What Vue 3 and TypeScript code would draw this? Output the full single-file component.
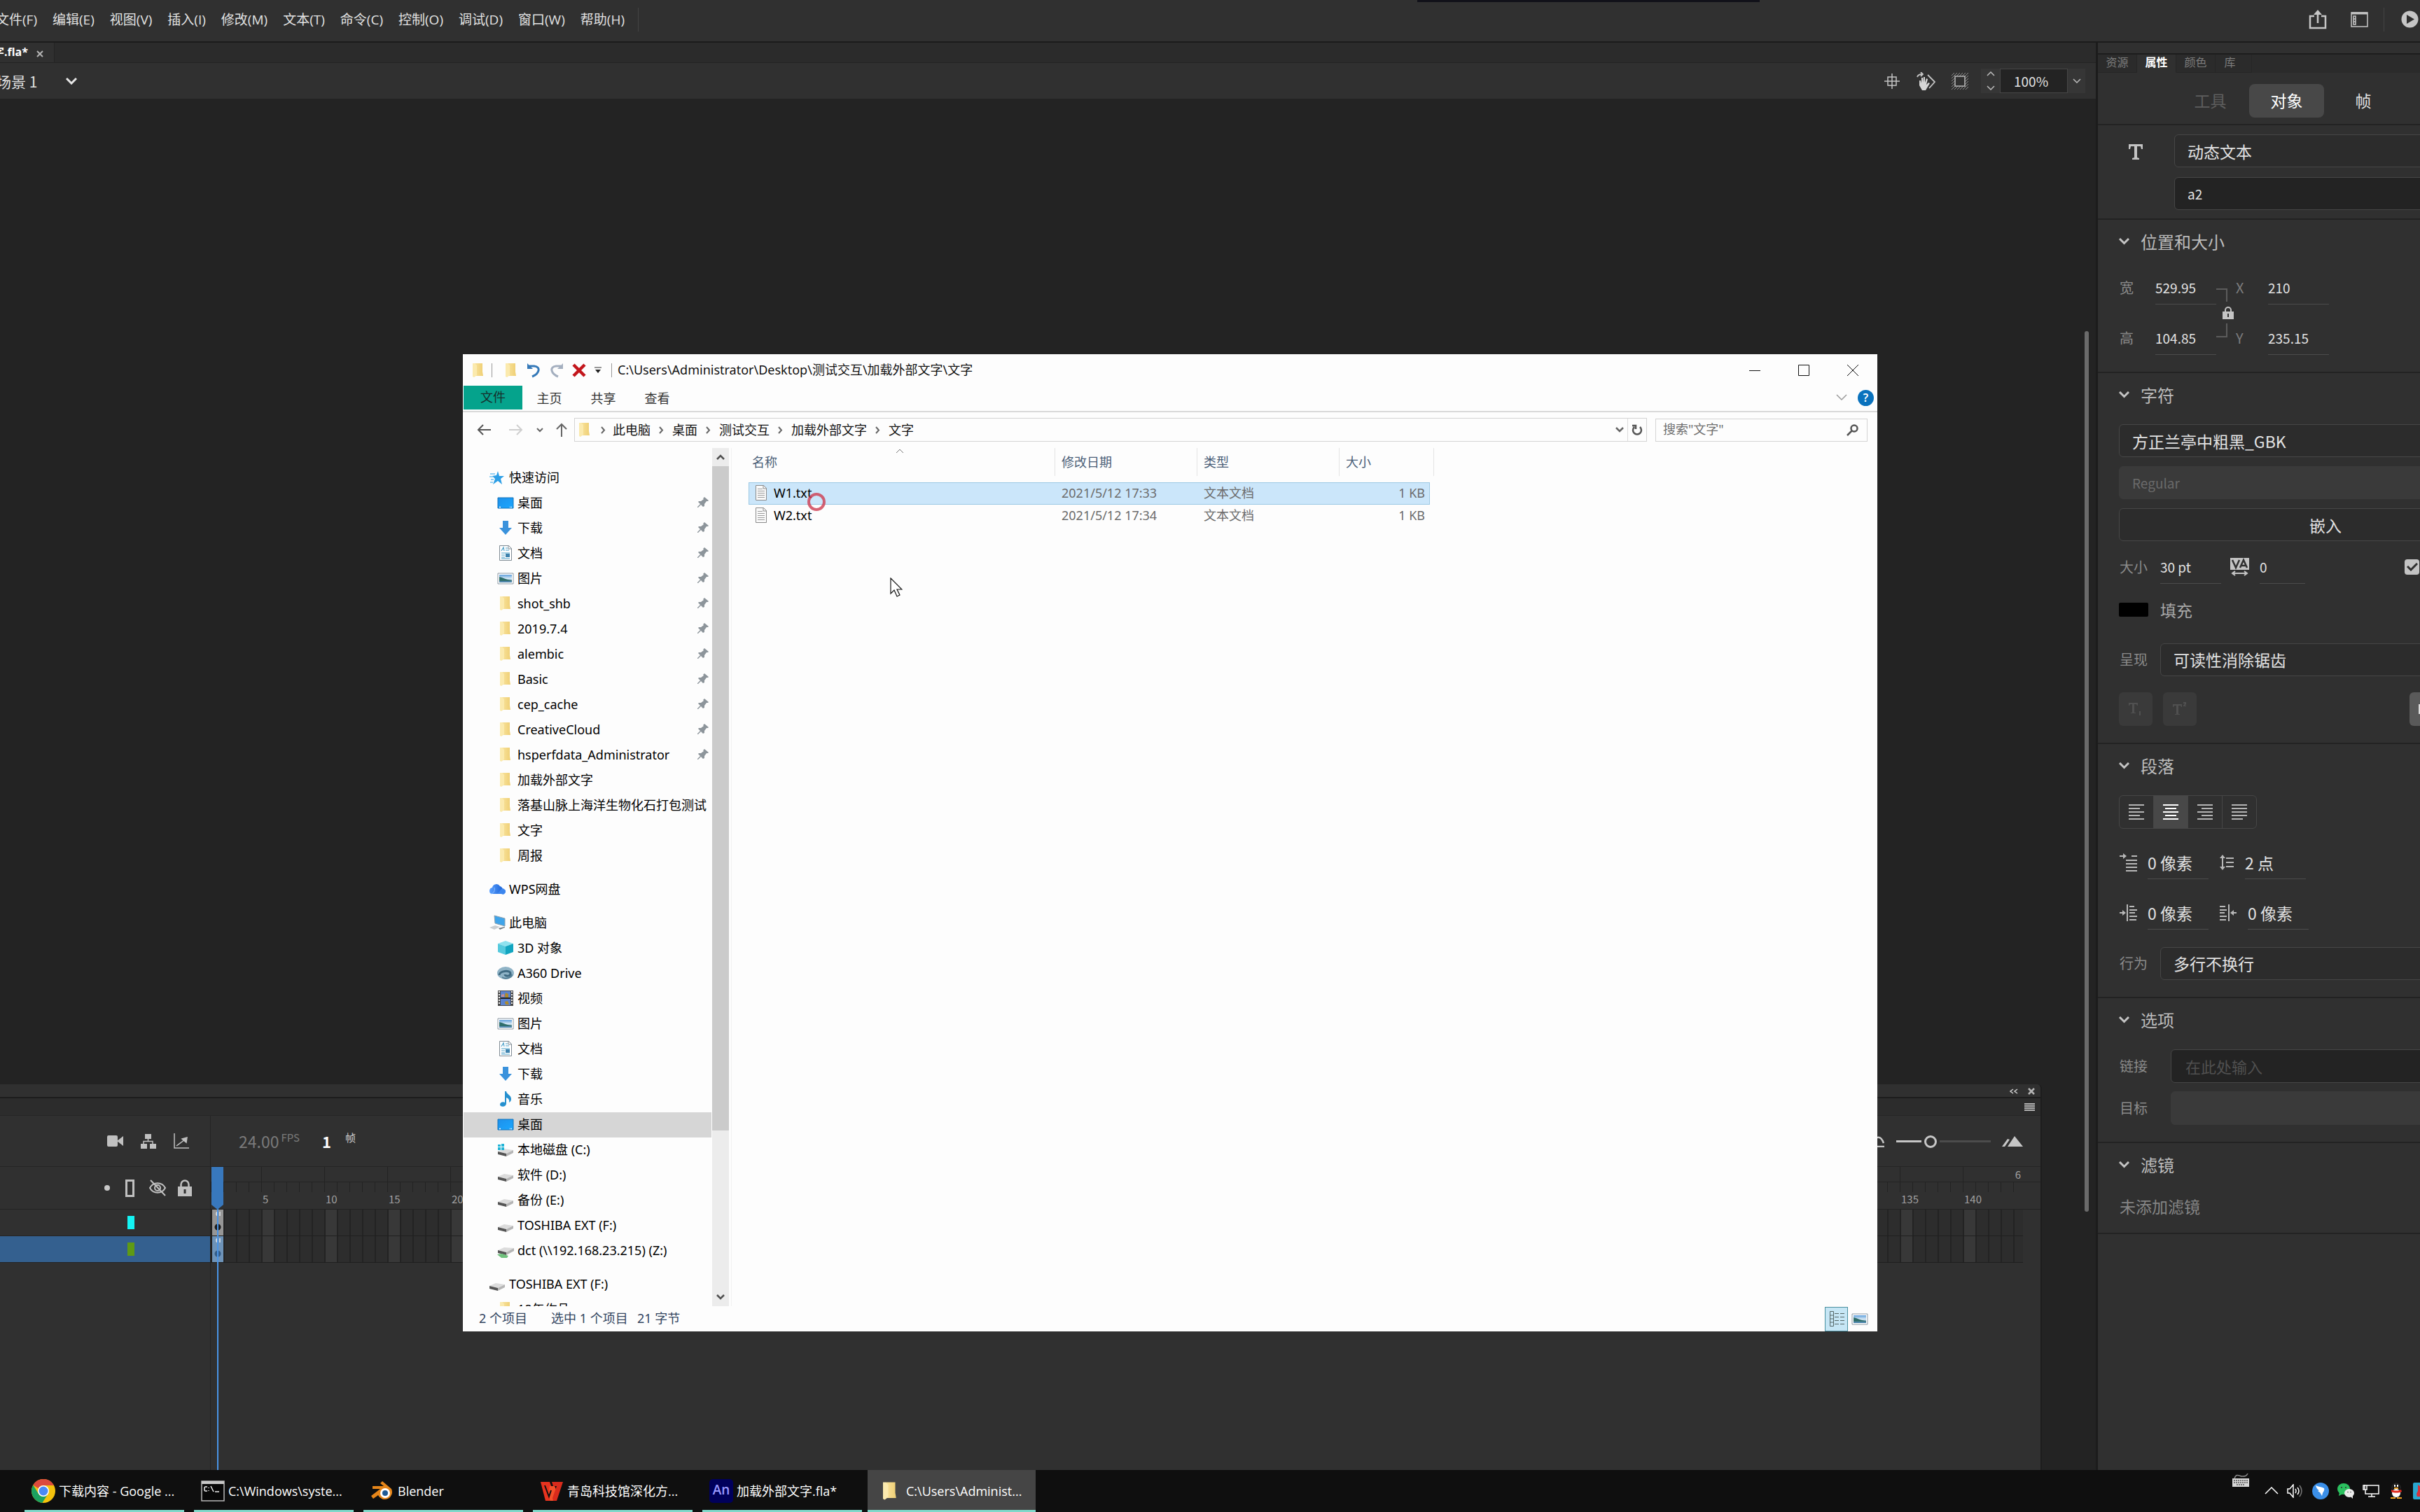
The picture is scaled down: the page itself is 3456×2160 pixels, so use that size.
<script setup lang="ts">
import { ref } from 'vue'

interface NavItem {
  icon: string
  label: string
  root?: boolean
  pinned?: boolean
  gap?: boolean
  active?: boolean
}

const menus = ['文件(F)', '编辑(E)', '视图(V)', '插入(I)', '修改(M)', '文本(T)', '命令(C)', '控制(O)', '调试(D)', '窗口(W)', '帮助(H)']

const panelTabs = ['资源', '属性', '颜色', '库']

const nav: NavItem[] = [
  { icon: 'star', label: '快速访问', root: true },
  { icon: 'desktop', label: '桌面', pinned: true },
  { icon: 'download', label: '下载', pinned: true },
  { icon: 'doc', label: '文档', pinned: true },
  { icon: 'picture', label: '图片', pinned: true },
  { icon: 'folder', label: 'shot_shb', pinned: true },
  { icon: 'folder', label: '2019.7.4', pinned: true },
  { icon: 'folder', label: 'alembic', pinned: true },
  { icon: 'folder', label: 'Basic', pinned: true },
  { icon: 'folder', label: 'cep_cache', pinned: true },
  { icon: 'folder', label: 'CreativeCloud', pinned: true },
  { icon: 'folder', label: 'hsperfdata_Administrator', pinned: true },
  { icon: 'folder', label: '加载外部文字' },
  { icon: 'folder', label: '落基山脉上海洋生物化石打包测试' },
  { icon: 'folder', label: '文字' },
  { icon: 'folder', label: '周报' },
  { icon: 'cloud', label: 'WPS网盘', root: true, gap: true },
  { icon: 'pc', label: '此电脑', root: true, gap: true },
  { icon: 'cube', label: '3D 对象' },
  { icon: 'a360', label: 'A360 Drive' },
  { icon: 'video', label: '视频' },
  { icon: 'picture', label: '图片' },
  { icon: 'doc', label: '文档' },
  { icon: 'download', label: '下载' },
  { icon: 'music', label: '音乐' },
  { icon: 'desktop', label: '桌面', active: true },
  { icon: 'drivec', label: '本地磁盘 (C:)' },
  { icon: 'drive', label: '软件 (D:)' },
  { icon: 'drive', label: '备份 (E:)' },
  { icon: 'drive', label: 'TOSHIBA EXT (F:)' },
  { icon: 'drivenet', label: 'dct (\\\\192.168.23.215) (Z:)' },
  { icon: 'drive', label: 'TOSHIBA EXT (F:)', root: true, gap: true },
  { icon: 'folder', label: '18年作品' },
]

const crumbs = ['此电脑', '桌面', '测试交互', '加载外部文字', '文字']
const files = [
  { name: 'W1.txt', date: '2021/5/12 17:33', type: '文本文档', size: '1 KB' },
  { name: 'W2.txt', date: '2021/5/12 17:34', type: '文本文档', size: '1 KB' },
]
const selected = ref(0)
const align = ref(1)
const zoomLevel = ref(28)
const instanceName = ref('a2')

const aligns = [
  { label: '左对齐', d: 'M0 1h22M0 6h16M0 11h22M0 16h16M0 21h22' },
  { label: '居中对齐', d: 'M0 1h22M3 6h16M0 11h22M3 16h16M0 21h22' },
  { label: '右对齐', d: 'M0 1h22M6 6h16M0 11h22M6 16h16M0 21h22' },
  { label: '两端对齐', d: 'M0 1h22M0 6h22M0 11h22M0 16h22M0 21h16' },
]

const frames = Array.from({ length: 144 }, (_, i) => i + 1)

const tasks = [
  { icon: 'chrome', label: '下载内容 - Google ...' },
  { icon: 'cmd', label: 'C:\\Windows\\syste...' },
  { icon: 'blender', label: 'Blender' },
  { icon: 'wps', label: '青岛科技馆深化方...' },
  { icon: 'an', label: '加载外部文字.fla*' },
  { icon: 'folder', label: 'C:\\Users\\Administ...', active: true },
]
</script>

<template>
  <svg class="sprite" aria-hidden="true">
    <defs>
      <linearGradient id="g-fold" x1="0" x2="1"><stop offset="0" stop-color="#f8e29c" /><stop offset="1" stop-color="#efcf74" /></linearGradient>
      <linearGradient id="g-desk" x1="0" x2="1" y2="1"><stop offset="0" stop-color="#1e90ea" /><stop offset="1" stop-color="#1aa7ff" /></linearGradient>
      <linearGradient id="g-cloud" x2="1"><stop offset="0" stop-color="#5aa0ff" /><stop offset="1" stop-color="#1c63d6" /></linearGradient>
      <linearGradient id="g-sky" y2="1" x2="0"><stop offset="0" stop-color="#5f9fdc" /><stop offset="0.5" stop-color="#d6e8f5" /><stop offset="1" stop-color="#2f6f9c" /></linearGradient>
    </defs>
    <symbol id="i-folder" viewBox="0 0 24 24">
      <path d="M7 2h11v12l1 6H7z" fill="url(#g-fold)" />
      <path d="M4 2h3l3 3v14l-4 3-2-1z" fill="#fbeaae" />
    </symbol>
    <symbol id="i-star" viewBox="0 0 24 24">
      <path d="M13 3l2 7h7l-5 4 2 8-6-5-7 5 3-8-4-4 6-1z" fill="#2d9fe6" />
      <path d="M2 7h7M1 11h5M3 15h4M2 19h4" stroke="#6fc0f0" stroke-width="1.500" />
    </symbol>
    <symbol id="i-desktop" viewBox="0 0 24 24">
      <path d="M1 5h22v15H1z" fill="url(#g-desk)" stroke="#1572b8" />
      <path d="M3 18.500h2M18 18.500h1M20 18.500h1" stroke="#fff" stroke-width="1.500" />
    </symbol>
    <symbol id="i-download" viewBox="0 0 24 24"><path d="M8 2h8v10h5l-9 10-9-10h5z" fill="#3a92dc" /></symbol>
    <symbol id="i-doc" viewBox="0 0 24 24">
      <path d="M3.500 1.500h13l4 4v17h-17z" fill="#fff" stroke="#7f8a93" />
      <path d="M16 1v5h5" fill="none" stroke="#7f8a93" />
      <path d="M6 9l3-5 1 5M12 5h3M12 8h5M6 12h12M6 15h5M6 18h5M6 20h12" fill="none" stroke="#4a9fc8" stroke-width="1.200" />
      <path d="M12 13h6v5h-6z" fill="#3d82ad" />
    </symbol>
    <symbol id="i-picture" viewBox="0 0 24 24">
      <path d="M1 5h22v15H1z" fill="#fff" stroke="#8b98a3" />
      <path d="M3 7h18v11H3z" fill="url(#g-sky)" />
      <path d="M3 10c5 1 9 4 18 5v1H3z" fill="#2f6e6b" />
    </symbol>
    <symbol id="i-cloud" viewBox="0 0 24 24">
      <path d="M1 15a5 5 0 0 1 4-5 6 6 0 0 1 11-2 6 6 0 0 1 1 11H5a4 4 0 0 1-4-4z" fill="url(#g-cloud)" />
      <path d="M12 19l5-6a4 4 0 1 1 1 6z" fill="#3c86ee" />
      <path d="M3 19c4-1 6-4 5-9" stroke="#8fc0ff" fill="none" />
    </symbol>
    <symbol id="i-pc" viewBox="0 0 24 24">
      <path d="M8 2l15 4v11L9 13z" fill="#3fa4ea" stroke="#8ba0ae" />
      <path d="M1 19l8-3 7 2-8 4z" fill="#c9ced2" /><path d="M14 20l9-2v1l-7 3z" fill="#6c757d" />
    </symbol>
    <symbol id="i-cube" viewBox="0 0 24 24">
      <path d="M1 6l11-4 11 4-11 4z" fill="#8fe2ef" /><path d="M1 6l11 4v12L1 18z" fill="#55c9dd" /><path d="M23 6l-11 4v12l11-4z" fill="#12a5c0" />
    </symbol>
    <symbol id="i-a360" viewBox="0 0 24 24">
      <ellipse cx="12" cy="12" rx="12" ry="9" fill="#8fb3c6" />
      <path d="M3 15c0-6 16-8 16-2 0 4-8 4-8 1" fill="none" stroke="#3f6a82" stroke-width="3" />
      <path d="M7 18c6 4 14 0 14-4" fill="none" stroke="#557f96" stroke-width="2" />
    </symbol>
    <symbol id="i-video" viewBox="0 0 24 24">
      <path d="M1 1h22v22H1z" fill="#4a4a4a" /><path d="M5 2h14v20H5z" fill="#5b83cf" />
      <path d="M3 2v20M21 2v20" stroke="#eee" stroke-width="2" stroke-dasharray="2 2" />
      <path d="M12 4l4 2v5l-3 2-2-4zM11 17l4-1 2 5h-5z" fill="#b08a28" /><path d="M5 12h14" stroke="#222" stroke-width="2" />
      <path d="M6 7l4-1v4H6z" fill="#c98d96" />
    </symbol>
    <symbol id="i-music" viewBox="0 0 24 24">
      <path d="M11 1h2c1 5 7 5 7 11 0 2-1 4-3 5 1-4-1-6-4-7v8c0 6-9 6-9 2 0-3 4-5 7-3z" fill="#2590cf" />
    </symbol>
    <symbol id="i-drive" viewBox="0 0 24 24">
      <path d="M1 15l9-4 13 2-10 5z" fill="#dcdcdc" /><path d="M1 15l12 3v4L1 19z" fill="#555" /><path d="M13 18l10-5v4l-10 5z" fill="#b5b5b5" />
    </symbol>
    <symbol id="i-drivec" viewBox="0 0 24 24">
      <path d="M1 15l9-4 13 2-10 5z" fill="#dcdcdc" /><path d="M1 15l12 3v4L1 19z" fill="#555" /><path d="M13 18l10-5v4l-10 5z" fill="#b5b5b5" />
      <path d="M1 5h4v3H1zM6 4h4v4H6zM1 9h4v4H1zM6 9h4v4H6z" fill="#22b4d6" />
    </symbol>
    <symbol id="i-drivenet" viewBox="0 0 24 24">
      <path d="M1 12l9-4 14 1-11 6z" fill="#dcdcdc" /><path d="M1 12l12 3v4L1 16z" fill="#555" /><path d="M13 15l11-6v4l-11 6z" fill="#b5b5b5" />
      <path d="M0 18l7-1 9 3-2 3-8 0z" fill="#6fc07c" />
    </symbol>
    <symbol id="i-pin" viewBox="0 0 16 16">
      <path d="M10 0l6 5-1 1-2 0-3 4 0 3-2 1-3-3-4 4-1 0 0-1 4-4-3-3 1-1 3 0 4-3-1-1z" fill="#8d959b" />
    </symbol>
    <symbol id="i-txt" viewBox="0 0 18 24">
      <path d="M1.500 1.500h11l4 4v17h-15z" fill="#fafafa" stroke="#8a8a8a" /><path d="M12 1v5h5" fill="none" stroke="#8a8a8a" />
      <path d="M4 6.500h7M4 9.500h10M4 12.500h10M4 15.500h10M4 18.500h10" stroke="#9a9a9a" />
    </symbol>
    <symbol id="i-chrome" viewBox="0 0 34 34">
      <circle cx="17" cy="17" r="17" fill="#f4c20d" />
      <path d="M2.300 8.500A17 17 0 0 1 32 9H17a8 8 0 0 0-7 4.500z" fill="#dc4a3d" />
      <path d="M2.300 8.500a17 17 0 0 0 13 25.400L23 22a8 8 0 0 1-13-1z" fill="#1aa260" />
      <circle cx="17" cy="17" r="8" fill="#fff" /><circle cx="17" cy="17" r="6.500" fill="#4a8af4" />
    </symbol>
    <symbol id="i-cmd" viewBox="0 0 34 34">
      <path d="M1 3h32v28H1z" fill="#080808" stroke="#b8b8b8" stroke-width="1.500" /><path d="M1 3h32v4H1z" fill="#c8c8c8" />
      <path d="M9 11H6l-1 1v4l1 1h3M11 12v1M11 16v1M14 10l4 8M20 18h6" stroke="#eee" stroke-width="1.500" fill="none" />
    </symbol>
    <symbol id="i-blender" viewBox="0 0 34 34">
      <path d="M1 24l13-10H3v-4h16l-5-4 3-3 13 11a10 10 0 1 1-19 9l-7 5z" fill="#e6861a" />
      <circle cx="21" cy="20" r="7" fill="#fff" /><circle cx="21" cy="20" r="4" fill="#1f5a95" />
    </symbol>
    <symbol id="i-wps" viewBox="0 0 34 34">
      <path d="M1 4h13l5 14-4 13H8z" fill="#e8331f" />
      <path d="M14 10h7l4 9-4 12h-6l-3-8z" fill="#f4512a" />
      <path d="M17 4h16l-9 27h-5l-1-4 6-17h-5z" fill="#d92b1c" />
      <path d="M7 9l6 16 3-9" fill="none" stroke="#0f0f0f" stroke-width="2" />
    </symbol>
    <symbol id="i-an" viewBox="0 0 34 34">
      <rect width="34" height="34" rx="5" fill="#00005b" />
      <text x="17" y="22" text-anchor="middle" font-family="Open Sans, Noto Sans, sans-serif" font-size="19" font-weight="600" fill="#9999ff">An</text>
    </symbol>
  </svg>

  <div class="app">
    <div class="notch"></div>
    <header class="menubar">
      <nav class="menus">
        <button v-for="m in menus" :key="m" type="button">{{ m }}</button>
      </nav>
      <i class="vrule"></i>
      <div class="menu-tools">
        <button type="button" aria-label="共享" class="t-share">
          <svg width="26" height="28" viewBox="0 0 26 28" fill="none" stroke="#c6c6c6" stroke-width="2.500"><path d="M8 9H2v17h22V9h-6M13 19V4" /><path d="M13 0l6 7H7z" fill="#c6c6c6" stroke="none" /></svg>
        </button>
        <button type="button" aria-label="工作区" class="t-work">
          <svg width="25" height="22" viewBox="0 0 25 22" fill="none" stroke="#c6c6c6" stroke-width="1.500"><path d="M1 1h23v20H1z" /><path d="M1 2h23" stroke-width="3" /><path d="M4 6h3v12H4zM4 10h3M4 14h3" /></svg>
        </button>
        <i class="vrule"></i>
        <button type="button" aria-label="测试影片" class="t-play">
          <svg width="25" height="25" viewBox="0 0 25 25"><circle cx="12.500" cy="12.500" r="12" fill="#c6c6c6" /><path d="M8 6l11 6.500L8 19z" fill="#303030" /></svg>
        </button>
      </div>
    </header>

    <div class="workspace">
      <main class="doc">
        <div class="doc-tabs">
          <div class="doc-tab"><span>字.fla*</span><button type="button" aria-label="关闭文档"><svg width="10" height="10" viewBox="0 0 10 10" stroke="#b4b4b4" stroke-width="2"><path d="M1 1l8 8M9 1l-8 8" /></svg></button></div>
        </div>
        <div class="scene-bar">
          <span class="scene">场景 1</span>
          <svg class="scene-caret" width="16" height="10" viewBox="0 0 16 10" fill="none" stroke="#e6e6e6" stroke-width="3"><path d="M1 1l7 7 7-7" /></svg>
          <div class="stage-tools">
            <svg width="22" height="22" viewBox="0 0 22 22" fill="none" stroke="#c4c4c4" stroke-width="1.500"><path d="M5 5h12v12H5zM11 0v22M0 11h22" /></svg>
            <svg width="27" height="26" viewBox="0 0 27 26" fill="none" stroke="#c4c4c4"><path d="M1 7c1-3 4-4 7-4M6 0l3 3-3 3M16 4l10 10-8 9" stroke-width="1.800" /><path d="M4 12l2 0 1 4V8h2v7l1-8h2v8l2-6 2 1-2 8 3-3 2 1-6 10H8l-4-7z" fill="#d6d6d6" stroke="none" /></svg>
            <svg width="24" height="24" viewBox="0 0 24 24" fill="none" stroke="#b8b8b8"><path d="M0 4l4-4M0 8l8-8M0 12L12 0M0 16L16 0M0 20L20 0M0 24L24 0M4 24L24 4M8 24L24 8M12 24l12-12M16 24l8-8M20 24l4-4" stroke="#8c8c8c" /><rect x="5" y="5" width="14" height="14" fill="#303030" stroke-width="1.500" /></svg>
            <div class="zoom-box">
              <div class="spin">
                <svg width="12" height="7" viewBox="0 0 12 7" fill="none" stroke="#bbb" stroke-width="1.500"><path d="M1 6l5-5 5 5" /></svg>
                <svg width="12" height="7" viewBox="0 0 12 7" fill="none" stroke="#bbb" stroke-width="1.500"><path d="M1 1l5 5 5-5" /></svg>
              </div>
              <input aria-label="缩放" value="100%" />
              <button type="button" aria-label="缩放选项"><svg width="12" height="7" viewBox="0 0 12 7" fill="none" stroke="#bbb" stroke-width="1.500"><path d="M1 1l5 5 5-5" /></svg></button>
            </div>
          </div>
        </div>

        <div class="doc-body">
          <div class="stage-col">
            <div class="stage"></div>
            <section class="timeline">
              <div class="tl-head">
                <svg width="12" height="8" viewBox="0 0 12 8" fill="none" stroke="#d0d0d0" stroke-width="1.500"><path d="M5 1L1 4l4 3M11 1L7 4l4 3" /></svg>
                <svg width="10" height="10" viewBox="0 0 10 10" stroke="#b4b4b4" stroke-width="2.500"><path d="M1 1l8 8M9 1l-8 8" /></svg>
              </div>
              <div class="tl-tabs">
                <svg width="15" height="11" viewBox="0 0 15 11" stroke="#b4b4b4" stroke-width="2"><path d="M0 1h15M0 4h15M0 7h15M0 10h15" /></svg>
              </div>
              <div class="tl-bar">
                <div class="tl-left tl-tools">
                  <svg width="23" height="16" viewBox="0 0 23 16" fill="#c0c0c0"><rect width="15" height="16" rx="2" /><path d="M14 8l9-7v14z" /></svg>
                  <svg width="22" height="21" viewBox="0 0 22 21" fill="#c0c0c0"><path d="M6 0h9v7H6zM0 14h9v7H0zM13 14h9v7h-9z" /><path d="M10.500 7v4M4 14v-3.500h13V14" fill="none" stroke="#c0c0c0" stroke-width="1.500" /></svg>
                  <svg width="22" height="22" viewBox="0 0 22 22" fill="none" stroke="#c0c0c0" stroke-width="1.500"><path d="M1 0v21h21M4 18L16 9" /><path d="M12 8l7-2-1 7z" fill="#c0c0c0" /></svg>
                </div>
                <div class="tl-info"><span class="fps">24.00</span><sup class="fps-u">FPS</sup><b class="cur">1</b><sup class="cur-u">帧</sup></div>
                <div class="tl-zoom">
                  <svg width="30" height="16" viewBox="0 0 30 16" fill="none" stroke="#c6c6c6" stroke-width="2.500"><path d="M2 15h27M12 10c5-11 12-11 16 0" /></svg>
                  <input v-model="zoomLevel" type="range" min="0" max="100" aria-label="时间轴缩放" />
                  <svg width="30" height="16" viewBox="0 0 30 16" fill="#c6c6c6"><path d="M8 15L18 0l12 15zM0 15L8 4l3 1-7 10z" /></svg>
                </div>
              </div>
              <div class="tl-main">
                <div class="tl-left layers">
                  <div class="layer-head">
                    <svg width="8" height="8" viewBox="0 0 8 8"><circle cx="4" cy="4" r="4" fill="#c8c8c8" /></svg>
                    <svg width="13" height="25" viewBox="0 0 13 25"><path d="M1.500 1.500h10v22h-10z" fill="none" stroke="#c0c0c0" stroke-width="3" /></svg>
                    <svg width="26" height="24" viewBox="0 0 26 24" fill="none" stroke="#c0c0c0" stroke-width="2"><path d="M2 12c5-9 17-9 22 0-5 9-17 9-22 0zM3 1l21 22" /><circle cx="13" cy="12" r="4" /></svg>
                    <svg width="20" height="24" viewBox="0 0 20 24"><path d="M4.500 11V7a5.500 5.500 0 0 1 11 0v4" fill="none" stroke="#c0c0c0" stroke-width="2.500" /><path d="M0 10h20v14H0z" fill="#c0c0c0" /><path d="M8.500 14h3v6h-3z" fill="#303030" /></svg>
                  </div>
                  <div class="layer"><i class="swatch cyan"></i></div>
                  <div class="layer sel"><i class="swatch green"></i></div>
                </div>
                <div class="frames">
                  <div class="ruler">
                    <div v-for="f in frames" :key="f" class="tick" :class="{ major: f % 5 === 0 }"><span v-if="f % 5 === 0">{{ f }}</span></div>
                    <em>6</em>
                  </div>
                  <div v-for="r in 2" :key="r" class="frame-row">
                    <div v-for="f in frames" :key="f" class="cell" :class="{ fifth: f % 5 === 0, key: f === 1, blue: r === 2 }">
                      <svg v-if="f === 1" width="16" height="36" viewBox="0 0 16 36"><path d="M9 3a3 3 0 1 0 0 6M11 3v6" fill="none" stroke="#e2e6ea" stroke-width="1.500" /><circle cx="8" cy="25" r="4.500" :fill="r === 1 ? '#1c1c1c' : '#335c88'" /></svg>
                    </div>
                  </div>
                  <div class="playhead"></div>
                </div>
              </div>
            </section>
          </div>
          <div class="stage-scroll"><i></i></div>
        </div>
      </main>

      <aside class="props">
        <div class="strip"></div>
        <div class="ptabs">
          <button v-for="t in panelTabs" :key="t" type="button" :class="{ on: t === '属性' }">{{ t }}</button>
        </div>
        <div class="modes">
          <button type="button" class="off">工具</button>
          <button type="button" class="on">对象</button>
          <button type="button" class="frame">帧</button>
        </div>

        <section class="instance">
          <svg width="22" height="22" viewBox="0 0 22 22" fill="#c4c4c4"><path d="M1 0h20v7h-2l-1-4h-5v16l3 1v2H6v-2l3-1V3H4L3 7H1z" /></svg>
          <div class="stack">
            <select aria-label="文本类型" class="ctl big"><option>动态文本</option></select>
            <input v-model="instanceName" aria-label="实例名称" class="ctl well" />
          </div>
        </section>

        <section>
          <h3><svg width="15" height="10" viewBox="0 0 15 10"><path d="M1 1l6.500 6.500L14 1" /></svg>位置和大小</h3>
          <div class="body dims">
            <div class="row">
              <label class="lab s" for="w">宽</label><input id="w" class="num" value="529.95" />
              <svg class="link" width="16" height="48" viewBox="0 0 16 48" fill="none" stroke="#5c5c5c" stroke-width="2"><path d="M0 26h15v18" /></svg>
              <label class="lab x" for="x">X</label><input id="x" class="num" value="210" />
            </div>
            <div class="lockline">
              <svg width="16" height="18" viewBox="0 0 16 18"><path d="M4 8V5a4 4 0 0 1 8 0v3" fill="none" stroke="#c4c4c4" stroke-width="2" /><path d="M0 7h16v11H0z" fill="#c4c4c4" /><path d="M7 10h2v5H7z" fill="#303030" /></svg>
            </div>
            <div class="row">
              <label class="lab s" for="h">高</label><input id="h" class="num" value="104.85" />
              <svg class="link" width="16" height="48" viewBox="0 0 16 48" fill="none" stroke="#5c5c5c" stroke-width="2"><path d="M0 22h15V3" /></svg>
              <label class="lab x" for="y">Y</label><input id="y" class="num" value="235.15" />
            </div>
          </div>
        </section>

        <section>
          <h3><svg width="15" height="10" viewBox="0 0 15 10"><path d="M1 1l6.500 6.500L14 1" /></svg>字符</h3>
          <div class="body">
            <select aria-label="字体" class="ctl big"><option>方正兰亭中粗黑_GBK</option></select>
            <select aria-label="字体样式" class="ctl off" disabled><option>Regular</option></select>
            <button type="button" class="ctl big embed">嵌入</button>
            <div class="row">
              <label class="lab" for="fs">大小</label><input id="fs" class="num" value="30 pt" />
              <svg class="va" width="27" height="26" viewBox="0 0 27 26"><path d="M0 0h27v17H0z" fill="#c4c4c4" /><path d="M3 3l5 11 5-11M14 14l5-11 5 11M16 11h6" fill="none" stroke="#303030" stroke-width="2.500" /><path d="M4 22h19M7 19l-4 3 4 3M20 19l4 3-4 3" fill="none" stroke="#c4c4c4" stroke-width="2" /></svg>
              <input aria-label="字距" class="num narrow" value="0" />
              <label class="check"><input type="checkbox" checked aria-label="自动调整字距" /><svg width="16" height="12" viewBox="0 0 16 12" fill="none" stroke="#303030" stroke-width="3"><path d="M1 5l5 5 9-9" /></svg></label>
            </div>
            <div class="row"><i class="fill"></i><span class="fill-t">填充</span></div>
            <div class="row render"><label class="lab" for="rd">呈现</label><select id="rd" class="ctl big"><option>可读性消除锯齿</option></select></div>
            <div class="row scripts">
              <button type="button" aria-label="下标"><svg width="22" height="20" viewBox="0 0 22 20" fill="#505050"><path d="M1 1h13v4h-1l-1-2H9v12h2v1H4v-1h2V3H3L2 5H1zM16 13h2v6h-2z" /></svg></button>
              <button type="button" aria-label="上标"><svg width="22" height="20" viewBox="0 0 22 20" fill="#505050"><path d="M1 3h13v4h-1l-1-2H9v12h2v1H4v-1h2V5H3L2 7H1zM16 0h4v3l-2 2h2v1h-4V5l2-3h-2z" /></svg></button>
              <button type="button" aria-label="可选" class="lit"><i></i></button>
            </div>
          </div>
        </section>

        <section>
          <h3><svg width="15" height="10" viewBox="0 0 15 10"><path d="M1 1l6.500 6.500L14 1" /></svg>段落</h3>
          <div class="body para">
            <div class="aligns">
              <button v-for="(a, i) in aligns" :key="a.label" type="button" :aria-label="a.label" :class="{ on: align === i }" @click="align = i">
                <svg width="22" height="22" viewBox="0 0 22 22" stroke-width="2"><path :d="a.d" /></svg>
              </button>
            </div>
            <div class="row ind">
              <svg width="26" height="26" viewBox="0 0 26 26" fill="none" stroke="#b8b8b8" stroke-width="2"><path d="M0 4h7M17 4h8M9 10h16M9 15h16M9 20h16M9 25h16" /><path d="M5 0l5 4-5 4z" fill="#b8b8b8" stroke="none" /></svg>
              <input aria-label="缩进" class="num mid" value="0 像素" />
              <svg width="20" height="22" viewBox="0 0 20 22" fill="none" stroke="#b8b8b8" stroke-width="2"><path d="M4 3v16M9 5h11M9 11h11M9 17h11" /><path d="M4 0l4 5H0zM4 22l4-5H0z" fill="#b8b8b8" stroke="none" /></svg>
              <input aria-label="行距" class="num mid" value="2 点" />
            </div>
            <div class="row ind">
              <svg width="26" height="24" viewBox="0 0 26 24" fill="none" stroke="#b8b8b8" stroke-width="2"><path d="M0 12h6M11 0v24M14 3h7M14 8h11M14 12h8M14 17h11M14 22h10" /><path d="M4 8l5 4-5 4z" fill="#b8b8b8" stroke="none" /></svg>
              <input aria-label="左边距" class="num mid" value="0 像素" />
              <svg width="24" height="24" viewBox="0 0 24 24" fill="none" stroke="#b8b8b8" stroke-width="2"><path d="M18 12h6M13 0v24M0 3h8M0 8h10M0 12h7M0 17h10M0 22h9" /><path d="M20 8l-5 4 5 4z" fill="#b8b8b8" stroke="none" /></svg>
              <input aria-label="右边距" class="num mid" value="0 像素" />
            </div>
            <div class="row"><label class="lab" for="bh">行为</label><select id="bh" class="ctl big"><option>多行不换行</option></select></div>
          </div>
        </section>

        <section>
          <h3><svg width="15" height="10" viewBox="0 0 15 10"><path d="M1 1l6.500 6.500L14 1" /></svg>选项</h3>
          <div class="body opts">
            <div class="row"><label class="lab wide" for="ln">链接</label><input id="ln" class="ctl well link-in" placeholder="在此处输入" /></div>
            <div class="row"><label class="lab wide" for="tg">目标</label><select id="tg" class="ctl off" disabled><option></option></select></div>
          </div>
        </section>

        <section>
          <h3><svg width="15" height="10" viewBox="0 0 15 10"><path d="M1 1l6.500 6.500L14 1" /></svg>滤镜</h3>
          <p class="none">未添加滤镜</p>
        </section>
      </aside>
    </div>

    <footer class="taskbar">
      <div class="tasks">
        <button v-for="t in tasks" :key="t.label" type="button" :class="{ on: t.active }">
          <svg :width="t.active ? 30 : 34" :height="t.active ? 30 : 34"><use :href="'#i-' + t.icon" /></svg><span>{{ t.label }}</span>
        </button>
      </div>
      <div class="tray">
        <svg class="kb" width="24" height="20" viewBox="0 0 24 20"><path d="M0 7h24v12H0z" fill="#d8d8d8" /><path d="M2 10h20M2 13h20M6 16h12" stroke="#555" stroke-width="1.500" stroke-dasharray="2 1" /><path d="M3 7c3-8 7-3 11-3 4 0 6 0 8-4" fill="none" stroke="#8a8a8a" stroke-width="1.500" /></svg>
        <svg width="20" height="12" viewBox="0 0 20 12" fill="none" stroke="#fff" stroke-width="1.500"><path d="M1 10l9-9 9 9" /></svg>
        <svg width="24" height="20" viewBox="0 0 24 20" fill="none" stroke="#fff" stroke-width="1.500"><path d="M1 7h3l5-6v18l-5-6H1zM12 7q2 3 0 6M15 5q4 5 0 10" /><path d="M18 2q6 8 0 16" stroke="#777" /></svg>
        <svg width="24" height="24" viewBox="0 0 24 24"><circle cx="12" cy="12" r="12" fill="#3b8fe8" /><path d="M5 4c4 2 8 2 12 4 1 3-1 5-2 7l-1 4-3-5-3-2 2-1c-3-1-4-4-5-7z" fill="#fff" /></svg>
        <svg width="24" height="22" viewBox="0 0 24 22"><ellipse cx="9" cy="8" rx="9" ry="8" fill="#2bc15f" /><path d="M3 13l-1 5 6-3z" fill="#2bc15f" /><ellipse cx="17" cy="14" rx="7" ry="6" fill="#ececec" /><path d="M19 19l3 3v-5z" fill="#ececec" /><path d="M6 5v2M12 5v2M15 12v1M19 12v1" stroke="#333" stroke-width="1.500" /></svg>
        <svg width="24" height="20" viewBox="0 0 24 20" fill="none" stroke="#fff" stroke-width="1.500"><path d="M6 2h17v12H4V8M8 18h10M13 14v4M1 2h5v6H1zM3 1v7" /></svg>
        <svg width="24" height="24" viewBox="0 0 24 24"><ellipse cx="12" cy="7" rx="6" ry="6" fill="#111" stroke="#333" /><ellipse cx="12" cy="14" rx="8" ry="7" fill="#151515" /><ellipse cx="12" cy="15" rx="6" ry="6" fill="#fff" /><path d="M5 10c5 2 9 2 14 0l1 3c-5 2-11 2-15 0z" fill="#e02b20" /><path d="M4 21h7v2H4zM13 21h7v2h-7zM9 7h6v2H9z" fill="#f5a623" /><path d="M10 3v3M14 3v3" stroke="#fff" stroke-width="2" /></svg>
        <svg width="24" height="24" viewBox="0 0 24 24"><rect width="24" height="24" rx="2" fill="#2aa7cf" /><path d="M7 3l4 3v14H6c-2-4 0-6 1-8z" fill="#d8323a" /></svg>
      </div>
    </footer>

    <section class="win">
      <div class="titlebar">
        <svg width="24" height="24"><use href="#i-folder" /></svg>
        <i class="tb-sep"></i>
        <svg width="24" height="24"><use href="#i-folder" /></svg>
        <svg width="20" height="22" viewBox="0 0 20 22" fill="none" stroke="#3579b8" stroke-width="3"><path d="M8 20c10-4 13-14 3-15H4" /><path d="M1 1v8h8z" fill="#3579b8" stroke="none" /></svg>
        <svg width="20" height="22" viewBox="0 0 20 22" fill="none" stroke="#a4afbf" stroke-width="3"><path d="M12 20C2 16-1 6 9 5h7" /><path d="M19 1v8h-8z" fill="#a4afbf" stroke="none" /></svg>
        <svg width="20" height="20" viewBox="0 0 20 20" stroke="#c3161c" stroke-width="4.500"><path d="M2 2l16 16M18 2L2 18" /></svg>
        <svg width="10" height="10" viewBox="0 0 10 10"><path d="M0 1h10" stroke="#333" /><path d="M1 4h8L5 9z" fill="#222" /></svg>
        <i class="tb-sep"></i>
        <span class="title">C:\Users\Administrator\Desktop\测试交互\加载外部文字\文字</span>
        <div class="caps">
          <button type="button" aria-label="最小化"><svg width="16" height="16" viewBox="0 0 16 16" stroke="#111"><path d="M0 8.500h16" /></svg></button>
          <button type="button" aria-label="最大化"><svg width="16" height="16" viewBox="0 0 16 16" fill="none" stroke="#111"><path d="M.5.500h15v15H.500z" /></svg></button>
          <button type="button" aria-label="关闭"><svg width="16" height="16" viewBox="0 0 16 16" stroke="#111"><path d="M0 0l16 16M16 0L0 16" /></svg></button>
        </div>
      </div>
      <div class="ribbon">
        <button type="button" class="file">文件</button>
        <button type="button">主页</button>
        <button type="button">共享</button>
        <button type="button">查看</button>
        <div class="rb-right">
          <svg width="16" height="10" viewBox="0 0 16 10" fill="none" stroke="#9a9a9a" stroke-width="1.500"><path d="M1 1l7 7 7-7" /></svg>
          <button type="button" class="help">?</button>
        </div>
      </div>
      <div class="address">
        <svg class="a-back" width="20" height="16" viewBox="0 0 20 16" fill="none" stroke="#555" stroke-width="2"><path d="M20 8H2M9 1L2 8l7 7" /></svg>
        <svg class="a-fwd" width="20" height="16" viewBox="0 0 20 16" fill="none" stroke="#cfcfcf" stroke-width="2"><path d="M0 8h18M11 1l7 7-7 7" /></svg>
        <svg class="a-dn" width="10" height="7" viewBox="0 0 10 7" fill="none" stroke="#666" stroke-width="2"><path d="M1 1l4 4 4-4" /></svg>
        <svg class="a-up" width="16" height="20" viewBox="0 0 16 20" fill="none" stroke="#666" stroke-width="2"><path d="M8 20V2M1 9l7-7 7 7" /></svg>
        <div class="path">
          <svg width="24" height="24"><use href="#i-folder" /></svg>
          <template v-for="c in crumbs" :key="c">
            <span class="sep"><svg width="7" height="11" viewBox="0 0 7 11" fill="none" stroke="#666" stroke-width="2"><path d="M1 1l4 4.500L1 10" /></svg></span>
            <a href="#">{{ c }}</a>
          </template>
          <div class="path-r">
            <svg width="12" height="8" viewBox="0 0 12 8" fill="none" stroke="#666" stroke-width="2.500"><path d="M1 1l5 5 5-5" /></svg>
            <button type="button" aria-label="刷新"><svg width="16" height="17" viewBox="0 0 16 17" fill="none" stroke="#555" stroke-width="2.500"><path d="M12 4a6 6 0 1 1-8 0M1 2h5v5" /></svg></button>
          </div>
        </div>
        <div class="search">
          <input aria-label="搜索" placeholder="搜索&quot;文字&quot;" />
          <svg width="18" height="17" viewBox="0 0 18 17" fill="none" stroke="#555" stroke-width="2.500"><circle cx="11" cy="6" r="4.500" /><path d="M8 9l-7 7" /></svg>
        </div>
      </div>
      <div class="win-body">
        <nav class="side">
          <a v-for="(n, i) in nav" :key="i" href="#" :class="{ root: n.root, gap: n.gap, on: n.active }">
            <svg width="24" height="24"><use :href="'#i-' + n.icon" /></svg><span>{{ n.label }}</span>
            <svg v-if="n.pinned" class="pin" width="16" height="16"><use href="#i-pin" /></svg>
          </a>
        </nav>
        <div class="sbar">
          <button type="button" aria-label="向上滚动"><svg width="12" height="8" viewBox="0 0 12 8" fill="none" stroke="#505050" stroke-width="2.500"><path d="M1 7l5-5 5 5" /></svg></button>
          <i></i>
          <button type="button" aria-label="向下滚动" class="dn"><svg width="12" height="8" viewBox="0 0 12 8" fill="none" stroke="#505050" stroke-width="2.500"><path d="M1 1l5 5 5-5" /></svg></button>
        </div>
        <div class="list">
          <table>
            <colgroup><col class="c1" /><col class="c2" /><col class="c2" /><col class="c4" /></colgroup>
            <thead>
              <tr>
                <th>名称<svg class="sort" width="12" height="7" viewBox="0 0 12 7" fill="none" stroke="#777"><path d="M1 6l5-5 5 5" /></svg></th>
                <th>修改日期</th><th>类型</th><th>大小</th>
              </tr>
            </thead>
            <tbody>
              <tr v-for="(f, i) in files" :key="f.name" :class="{ sel: selected === i }" @click="selected = i">
                <td><div class="fname"><svg width="18" height="24"><use href="#i-txt" /></svg>{{ f.name }}</div></td>
                <td>{{ f.date }}</td><td>{{ f.type }}</td><td>{{ f.size }}</td>
              </tr>
            </tbody>
          </table>
        </div>
      </div>
      <div class="status">
        <span class="s1">2 个项目</span><span class="s2">选中 1 个项目</span><span class="s3">21 字节</span>
        <div class="views">
          <button type="button" aria-label="详细信息" class="on"><svg width="22" height="22" viewBox="0 0 22 22" fill="none" stroke="#566"><path d="M1.500.500h5v21h-5zM1.500 6h5M1.500 11h5M1.500 16h5M8 3.500h6M16 3.500h6M8 8.500h6M16 8.500h6M8 13.500h6M16 13.500h6M8 18.500h6M16 18.500h6" /></svg></button>
          <button type="button" aria-label="大图标"><svg width="24" height="24"><use href="#i-picture" /></svg></button>
        </div>
      </div>
    </section>

    <i class="ring"></i>
    <svg class="cursor" width="18" height="28" viewBox="0 0 18 28"><path d="M1 1v22l5-5 4 9 4-2-4-8h7z" fill="#fff" stroke="#111" stroke-width="1.200" /></svg>
  </div>
</template>

<style>
body { background: #232323; }
</style>

<style scoped>
* { box-sizing: border-box; }
button, input, select { font: inherit; color: inherit; background: none; border: 0; padding: 0; margin: 0; border-radius: 0; appearance: none; outline: 0; }
button { display: inline-flex; align-items: center; justify-content: center; white-space: nowrap; }
a { color: inherit; text-decoration: none; }
svg { flex: none; display: block; }
i, em { font-style: normal; }
.sprite { position: absolute; width: 0; height: 0; }

.app { position: relative; min-height: 100vh; display: flex; flex-direction: column; overflow: hidden; background: #232323; color: #e2e2e2; font: 19px/24px "Noto Sans CJK SC", "Noto Sans", sans-serif; }
.notch { position: absolute; top: 0; left: 2024px; width: 489px; height: 3px; background: #111119; z-index: 2; }

.menubar { display: flex; align-items: center; height: 61px; padding-bottom: 4px; background: #303030; border-bottom: 2px solid #1b1b1b; }
.menus { display: flex; gap: 22px; margin-left: -6px; font-family: "Open Sans", "Noto Sans CJK SC", sans-serif; font-size: 19px; }
.vrule { width: 1px; height: 34px; background: #444; margin-left: 19px; }
.menu-tools { display: flex; align-items: center; margin-left: auto; }
.t-work { margin-left: 34px; }
.menu-tools .vrule { margin: 0 24px 0 22px; }
.t-play { margin-right: 2px; }

.workspace { flex: 1; display: flex; min-height: 0; }
.doc { flex: 1; min-width: 0; display: flex; flex-direction: column; border-right: 3px solid #1c1c1c; }
.doc-tabs { height: 29px; background: #2b2b2b; border-bottom: 1px solid #232323; }
.doc-tab { display: flex; align-items: center; width: 78px; height: 28px; padding-bottom: 3px; background: #303030; border-right: 1px solid #242424; font: 700 16px/24px "Open Sans", "Noto Sans CJK SC", sans-serif; color: #fff; }
.doc-tab span { display: flex; justify-content: flex-end; width: 40px; white-space: nowrap; }
.doc-tab button { margin: 6px 0 0 12px; }
.scene-bar { display: flex; align-items: center; height: 51px; background: #303030; }
.scene { margin-left: -5px; width: 99px; font-size: 21px; white-space: nowrap; }
.stage-tools { display: flex; align-items: center; margin-left: auto; margin-right: 15px; }
.stage-tools svg:nth-child(1) { margin-right: 24px; }
.stage-tools svg:nth-child(2) { margin-right: 23px; }
.stage-tools svg:nth-child(3) { margin-right: 18px; }
.zoom-box { display: flex; height: 35px; background: #363636; }
.spin { width: 27px; display: flex; flex-direction: column; align-items: center; justify-content: space-between; padding: 4px 0; }
.stage-tools .spin svg, .stage-tools .zoom-box button svg { margin: 0; }
.zoom-box input { width: 97px; padding-left: 19px; background: #232323; border: 1px solid #464646; }
.zoom-box button { width: 25px; }

.doc-body { flex: 1; display: flex; min-height: 0; }
.stage-col { flex: 1; min-width: 0; display: flex; flex-direction: column; }
.stage { flex: 1; }
.stage-scroll { width: 77px; display: flex; padding: 332px 0 369px 61px; }
.stage-scroll i { width: 6px; background: #6b6b6b; border-radius: 3px; }

.timeline { height: 551px; background: #303030; border-right: 2px solid #1d1d1d; display: flex; flex-direction: column; border-top-right-radius: 6px; }
.tl-head { height: 20px; border-bottom: 2px solid #1c1c1c; display: flex; align-items: center; justify-content: flex-end; gap: 14px; padding: 2px 8px 0 0; }
.tl-tabs { height: 25px; background: #2c2c2c; border-bottom: 1px solid #262626; display: flex; align-items: center; justify-content: flex-end; padding-right: 8px; }
.tl-bar { height: 73px; border-bottom: 1px solid #242424; display: flex; align-items: center; }
.tl-left { width: 301px; flex: none; border-right: 1px solid #242424; }
.tl-tools { height: 100%; display: flex; align-items: center; gap: 25px; padding-left: 153px; }
.tl-info { display: flex; align-items: center; padding-left: 40px; font-size: 23px; }
.tl-info sup { font-size: 15px; line-height: 24px; margin-bottom: 10px; }
.fps, .fps-u { color: #7a7a7a; }
.fps-u { margin-left: 3px; }
.cur { color: #fff; margin-left: 32px; font-size: 22px; }
.cur-u { margin-left: 20px; color: #ccc; }
.tl-zoom { margin-left: auto; display: flex; align-items: center; padding: 1px 25px 0 0; }
.tl-zoom input { width: 135px; height: 18px; margin: 0 16px; background: linear-gradient(90deg, #c6c6c6 36px, transparent 36px, transparent 62px, #4c4c4c 62px) center / 100% 3px no-repeat; }
.tl-zoom input::-webkit-slider-thumb { appearance: none; width: 18px; height: 18px; border: 3px solid #c6c6c6; border-radius: 50%; background: #303030; position: relative; left: 7px; }
.tl-main { flex: 1; display: flex; min-height: 0; }
.layer-head { height: 61px; display: flex; align-items: center; padding: 0 0 0 149px; border-bottom: 1px solid #242424; }
.layer-head svg:nth-child(2) { margin-left: 22px; }
.layer-head svg:nth-child(3) { margin-left: 20px; }
.layer-head svg:nth-child(4) { margin-left: 16px; }
.layer { height: 38px; padding: 9px 0 0 182px; border-bottom: 1px solid #242424; }
.layer.sel { background: #34608f; }
.swatch { display: block; width: 10px; height: 19px; }
.cyan { background: #14f4f4; }
.green { background: #5f9a14; }
.frames { position: relative; flex: 1; min-width: 0; }
.ruler { position: relative; height: 61px; display: flex; overflow: hidden; border-bottom: 1px solid #222; background: linear-gradient(#242424, #242424) 0 21px / 100% 1px no-repeat; }
.tick { flex: none; width: 18px; height: 14px; margin-top: 22px; border-left: 1px solid #232323; font-size: 15px; color: #a0a0a0; }
.tick.major { margin-top: 0; height: 36px; }
.tick span { display: block; padding: 34px 0 0 1px; }
.ruler em { position: absolute; right: 28px; top: 0; font-size: 15px; line-height: 22px; color: #a0a0a0; }
.frame-row { display: flex; height: 38px; margin-right: 25px; overflow: hidden; border-bottom: 1px solid #1f1f1f; }
.cell { flex: none; width: 18px; border-left: 2px solid #232323; background: #2d2d2d; }
.cell.fifth { background: #383838; }
.cell.key { background: #969696; border-left-color: #222; }
.cell.key.blue { background: #6e93b8; }
.playhead { position: absolute; left: 1px; top: 0; bottom: 0; width: 17px; background: linear-gradient(#4a94e6, #4a94e6) 8px 0 / 2px 100% no-repeat; }
.playhead::before { content: ""; display: block; height: 61px; background: #3878bd; clip-path: polygon(0 0, 100% 0, 100% 54px, 50% 100%, 0 54px); }

.props { width: 460px; flex: none; overflow: hidden; background: #303030; }
.props section { border-bottom: 2px solid #222; }
.strip { height: 17px; border-bottom: 2px solid #1d1d1d; }
.ptabs { height: 26px; display: flex; background: #2b2b2b; font-size: 16px; color: #7c7c7c; }
.ptabs button { width: 56px; padding-bottom: 6px; border-right: 1px solid #262626; border-bottom: 1px solid #262626; }
.ptabs button:last-child { width: 52px; padding-right: 10px; }
.ptabs .on { color: #fff; background: #303030; border-bottom-color: #303030; font-weight: 700; }
.modes { display: flex; padding: 16px 0 9px 109px; border-bottom: 2px solid #222; font-size: 23px; }
.modes button { width: 107px; height: 48px; border-radius: 8px; padding-bottom: 2px; }
.modes .off { color: #5e5e5e; padding-right: 4px; }
.modes .on { background: #484848; color: #fff; }
.modes .frame { padding-left: 5px; }
.instance { display: flex; padding: 13px 0 12px 43px; }
.instance > svg { margin-top: 14px; }
.stack { margin-left: 44px; display: grid; gap: 14px; }
.ctl { display: block; flex: none; width: 590px; height: 47px; border: 1px solid #464646; border-radius: 6px; padding: 0 0 0 18px; background: #2c2c2c; color: #e2e2e2; opacity: 1; line-height: 40px; }
.stack .ctl { width: 511px; }
.row .ctl { width: 531px; }
.opts .row .ctl { width: 516px; height: 48px; }
.big { font-size: 23px; }
.well { background: #232323; }
.ctl.off { background: #3a3a3a; border-color: #3a3a3a; color: #6a6a6a; }
.embed { display: flex; padding: 0; }
.link-in { font-size: 22px; padding-left: 20px; }
.link-in::placeholder { color: #505050; }
h3 { margin: 0; height: 62px; display: flex; align-items: center; gap: 16px; padding-left: 30px; font-size: 24px; font-weight: 400; color: #bcbcbc; }
h3 svg { fill: none; stroke: #c4c4c4; stroke-width: 3; }
.body { padding: 11px 0 24px 30px; display: flex; flex-direction: column; gap: 13px; }
.row { display: flex; align-items: center; height: 48px; }
.lab { flex: none; width: 59px; padding-left: 1px; font-size: 20px; color: #8a8a8a; }
.lab.s { width: 52px; }
.lab.x { width: 58px; padding-left: 12px; color: #7c7c7c; }
.lab.wide { width: 74px; }
.num { flex: none; width: 87px; height: 48px; border-bottom: 1px solid #4c4c4c; }
.narrow { width: 65px; }
.mid { font-size: 23px; }
.dims { gap: 0; }
.link { width: 16px; }
.lockline { height: 24px; padding: 3px 0 0 148px; }
.va { margin: 0 15px 0 13px; }
.check { width: 21px; height: 22px; margin-left: 142px; background: #c4c4c4; border-radius: 4px; display: grid; place-items: center; }
.check > * { grid-area: 1 / 1; }
.fill { width: 42px; height: 20px; background: #000; border-radius: 2px; margin-right: 17px; }
.fill-t { font-size: 23px; color: #a8a8a8; }
.render { margin-top: 10px; }
.scripts { gap: 15px; margin-top: 10px; }
.scripts button { flex: none; width: 48px; height: 48px; border-radius: 6px; background: #3a3a3a; }
.scripts .lit { margin-left: 289px; background: #5a5a5a; justify-content: flex-start; padding-left: 13px; }
.lit i { width: 20px; height: 14px; background: #ddd; }
.para { gap: 24px; }
.aligns { display: flex; width: 197px; height: 48px; border: 1px solid #464646; border-radius: 6px; overflow: hidden; }
.aligns button { flex: 1; border-right: 1px solid #464646; }
.aligns button:last-child { border-right: 0; }
.aligns svg { stroke: #b4b4b4; }
.aligns .on { background: #484848; }
.aligns .on svg { stroke: #fff; }
.ind svg:first-child { margin: 0 14px 0 1px; }
.ind svg:nth-child(3) { margin: 0 16px 0 16px; }
.opts { gap: 12px; }
.none { margin: 0; padding: 10px 0 20px 31px; font-size: 23px; line-height: 36px; color: #858585; }

.taskbar { height: 60px; flex: none; display: flex; background: #0f0f0f; overflow: hidden; font: 18px/24px "Open Sans", "Noto Sans CJK SC", sans-serif; color: #fff; }
.tasks { display: flex; gap: 14px; padding-left: 35px; }
.tasks button { width: 228px; justify-content: flex-start; padding: 3px 0 0 10px; gap: 5px; border-bottom: 3px solid #80d8ca; overflow: hidden; }
.tasks .on { width: 240px; margin-left: -6px; padding-left: 17px; gap: 8px; background: #454545; }
.tray { margin-left: auto; margin-right: -14px; display: flex; align-items: center; gap: 12px; }
.kb { align-self: flex-start; margin: 5px 10px 0 0; }

.win { position: absolute; left: 661px; right: 775px; top: 506px; bottom: 258px; display: flex; flex-direction: column; background: #fdfdfd; color: #111; font: 18px/24px "Noto Sans", "Noto Sans CJK SC", sans-serif; }
.titlebar { height: 45px; flex: none; display: flex; align-items: center; padding-left: 10px; }
.titlebar > svg:nth-child(3) { margin: 0 10px 0 15px; }
.titlebar > svg:nth-child(4) { margin-right: 13px; }
.titlebar > svg:nth-child(5) { margin-right: 12px; }
.titlebar > svg:nth-child(6) { margin-right: 12px; }
.tb-sep { width: 1px; height: 20px; background: #999; margin-left: 7px; }
.titlebar > svg:nth-child(7) + .tb-sep { margin-left: 14px; }
.title { margin-left: 8px; padding-bottom: 2px; white-space: nowrap; }
.caps { margin-left: auto; display: flex; gap: 54px; padding-right: 27px; }
.ribbon { height: 38px; flex: none; display: flex; align-items: flex-start; border-bottom: 2px solid #d9d9d9; color: #333; }
.ribbon > button { width: 77px; height: 34px; padding: 2px 2px 0 0; }
.ribbon .file { width: 84px; margin: 0 1px; background: #05a38c; color: #16302c; padding: 0 0 2px; }
.rb-right { margin-left: auto; display: flex; align-items: center; height: 34px; gap: 15px; padding-right: 5px; }
.ribbon .help { width: 23px; height: 23px; border-radius: 50%; background: #0a72bd; color: #fff; font-size: 16px; font-weight: 600; }
.address { height: 51px; flex: none; display: flex; align-items: center; padding: 0 14px 1px 20px; }
.a-fwd { margin-left: 26px; }
.a-dn { margin-left: 19px; }
.a-up { margin-left: 18px; }
.path { flex: 1; height: 34px; margin-left: 10px; border: 1px solid #d4d4d4; display: flex; align-items: center; padding-left: 2px; }
.path a { padding-bottom: 1px; }
.path > svg + .sep { width: 28px; }
.sep { width: 31px; display: flex; justify-content: center; }
.path-r { margin-left: auto; display: flex; align-items: center; height: 100%; gap: 5px; }
.path-r button { width: 27px; height: 100%; border-left: 1px solid #dcdcdc; }
.search { width: 303px; height: 33px; margin-left: 12px; border: 1px solid #d4d4d4; display: flex; align-items: center; padding: 0 11px 0 10px; }
.search input { flex: 1; min-width: 0; padding-bottom: 2px; }
.search input::placeholder { color: #6e6e6e; }
.win-body { flex: 1; display: flex; min-height: 0; }
.side { width: 356px; flex: none; overflow: hidden; padding: 25px 1px 0; }
.side a { display: flex; align-items: center; height: 36px; padding: 0 0 2px 48px; gap: 5px; color: #000; white-space: nowrap; }
.side a.root { padding-left: 36px; }
.side a.gap { margin-top: 12px; }
.side a.on { background: #d6d6d6; }
.side .pin { margin-left: auto; margin-right: 4px; }
.sbar { width: 24px; flex: none; background: #ececec; display: flex; flex-direction: column; }
.sbar button { height: 26px; }
.sbar i { height: 949px; background: #cbcbcb; }
.sbar .dn { margin-top: auto; }
.list { flex: 1; margin-left: 3px; padding-left: 24px; border-left: 1px solid #f2f2f2; }
table { table-layout: fixed; width: 973px; border-collapse: separate; border-spacing: 0; }
.c1 { width: 438px; }
.c2 { width: 203px; }
.c4 { width: 129px; }
th { position: relative; height: 40px; padding: 0 0 0 9px; text-align: left; font-weight: 400; color: #4a6078; border-right: 1px solid #e4e4e4; }
th:first-child { padding-left: 5px; }
th:last-child { border: 0; }
th:last-child::after { content: ""; position: absolute; right: -6px; top: 0; width: 1px; height: 40px; background: #e4e4e4; }
.sort { position: absolute; left: 210px; top: 1px; }
tbody::before { content: ""; display: block; height: 9px; }
td { height: 32px; padding: 0 0 2px 9px; line-height: 24px; color: #6b6b6b; border: 0 solid transparent; border-width: 1px 0; white-space: nowrap; }
td:first-child { padding-left: 8px; color: #000; border-left-width: 1px; }
.fname { display: flex; align-items: center; gap: 9px; }
td:last-child { text-align: right; padding-right: 6px; border-right-width: 1px; }
.sel td { background: #cbe6fa; border-color: #9cc9e4; }
.status { height: 36px; flex: none; display: flex; align-items: center; padding-left: 23px; color: #33455f; }
.status > span { padding-bottom: 2px; }
.s1 { width: 103px; }
.s2 { width: 123px; white-space: nowrap; }
.views { margin-left: auto; display: flex; align-items: center; padding-right: 13px; gap: 5px; }
.views .on { width: 33px; height: 35px; border: 1px solid #4a90a0; background: #c6e6f5; }

.ring { position: absolute; left: 1153px; top: 704px; width: 26px; height: 26px; border: 4px solid rgba(205, 60, 80, 0.8); border-radius: 50%; }
.cursor { position: absolute; left: 1271px; top: 825px; }
</style>
